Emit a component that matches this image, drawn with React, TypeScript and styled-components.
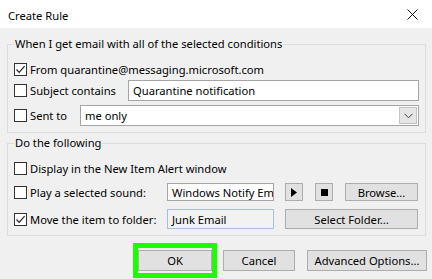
import React from 'react';
import styled, { createGlobalStyle } from 'styled-components';

const GlobalStyle = createGlobalStyle`
  html, body {
    margin: 0;
    padding: 0;
    background: #f0f0f0;
  }
  * {
    box-sizing: border-box;
  }
`;

const Dialog = styled.div`
  width: 432px;
  height: 279px;
  overflow: hidden;
  background: #f0f0f0;
  font-family: 'Noto Sans', 'Open Sans', sans-serif;
  font-size: 11.2px;
  color: #000;
`;

const TitleBar = styled.div`
  height: 28px;
  background: #fff;
  display: flex;
  align-items: center;
  justify-content: space-between;
  padding: 0 14px 0 8px;
`;

const Title = styled.span`
  margin-top: 2px;
`;

const Body = styled.div`
  padding: 8px 6px 0 7px;
`;

const Group = styled.fieldset<{ $top?: number }>`
  margin: ${(p) => p.$top || 0}px 0 0 0;
  padding: 0 6px 6px 6px;
  border: 1px solid #dcdcdc;
  min-width: 0;
`;

const Legend = styled.legend`
  padding: 0 1px;
  margin: 0;
  height: 16px;
  line-height: 16px;
`;

const Rows = styled.div`
  display: flex;
  flex-direction: column;
`;

const Row = styled.div<{ $h: number; $mt?: number }>`
  display: flex;
  align-items: center;
  height: ${(p) => p.$h}px;
  margin-top: ${(p) => p.$mt || 0}px;
`;

const Check = styled.span`
  width: 13px;
  height: 13px;
  border: 1px solid #333;
  background: #fff;
  display: inline-flex;
  align-items: center;
  justify-content: center;
  flex: none;
`;

const Label = styled.span<{ $w?: number }>`
  margin-left: 3px;
  white-space: nowrap;
  width: ${(p) => (p.$w ? `${p.$w}px` : 'auto')};
  flex: none;
`;

const TextBox = styled.div<{ $w?: number; $readonly?: boolean }>`
  height: 100%;
  width: ${(p) => (p.$w ? `${p.$w}px` : 'auto')};
  flex: ${(p) => (p.$w ? 'none' : '1')};
  background: ${(p) => (p.$readonly ? '#f2f2f2' : '#fff')};
  border: 1px solid ${(p) => (p.$readonly ? '#a8bedb' : '#a5a5a5')};
  padding: 0 4px;
  display: flex;
  align-items: center;
  white-space: nowrap;
  overflow: hidden;
`;

const Combo = styled.div`
  flex: 1;
  height: 100%;
  border: 1px solid #a5a5a5;
  background: #fff;
  display: flex;
  align-items: stretch;
`;

const ComboText = styled.span`
  flex: 1;
  padding-left: 4px;
  display: flex;
  align-items: center;
`;

const ComboArrow = styled.span`
  width: 18px;
  margin: 1px;
  background: #e5e5e5;
  border: 1px solid #c4c4c4;
  display: flex;
  align-items: center;
  justify-content: center;
`;

const Button = styled.button<{ $w: number; $h?: number; $ml?: number }>`
  width: ${(p) => p.$w}px;
  height: ${(p) => p.$h || 21}px;
  margin-left: ${(p) => p.$ml || 0}px;
  flex: none;
  background: #e1e1e1;
  border: 1px solid #adadad;
  font-family: inherit;
  font-size: inherit;
  color: #000;
  padding: 0;
  display: flex;
  align-items: center;
  justify-content: center;
`;

const Footer = styled.div`
  display: flex;
  justify-content: flex-end;
  align-items: center;
  padding-top: 7px;
  margin-right: -1px;
`;

const Highlight = styled.div`
  border: 5px solid #19ff00;
  padding: 2px 0;
  margin-right: 6px;
`;

const Tick = () => (
  <svg width="11" height="11" viewBox="0 0 11 11">
    <path d="M1.5 5.5 L4.2 8.3 L9.6 2.2" fill="none" stroke="#222" strokeWidth="1.2" />
  </svg>
);

const App: React.FC = () => {
  return (
    <Dialog>
      <GlobalStyle />
      <TitleBar>
        <Title>Create Rule</Title>
        <svg width="11" height="11" viewBox="0 0 11 11">
          <path d="M0.5 0.5 L10.5 10.5 M10.5 0.5 L0.5 10.5" stroke="#111" strokeWidth="1" />
        </svg>
      </TitleBar>
      <Body>
        <Group>
          <Legend>When I get email with all of the selected conditions</Legend>
          <Rows>
            <Row $h={22} $mt={6}>
              <Check>
                <Tick />
              </Check>
              <Label>From quarantine@messaging.microsoft.com</Label>
            </Row>
            <Row $h={21}>
              <Check />
              <Label $w={98}>Subject contains</Label>
              <TextBox>Quarantine notification</TextBox>
            </Row>
            <Row $h={21} $mt={4}>
              <Check />
              <Label $w={50}>Sent to</Label>
              <Combo>
                <ComboText>me only</ComboText>
                <ComboArrow>
                  <svg width="9" height="6" viewBox="0 0 9 6">
                    <path d="M0.5 0.8 L4.5 4.8 L8.5 0.8" fill="none" stroke="#444" strokeWidth="1" />
                  </svg>
                </ComboArrow>
              </Combo>
            </Row>
          </Rows>
        </Group>
        <Group $top={2}>
          <Legend>Do the following</Legend>
          <Rows>
            <Row $h={21} $mt={7}>
              <Check />
              <Label>Display in the New Item Alert window</Label>
            </Row>
            <Row $h={18} $mt={4}>
              <Check />
              <Label $w={137}>Play a selected sound:</Label>
              <TextBox $w={107}>Windows Notify Em</TextBox>
              <Button $w={18} $h={18} $ml={11}>
                <svg width="6" height="9" viewBox="0 0 6 9">
                  <path d="M0 0 L6 4.5 L0 9 Z" fill="#000" />
                </svg>
              </Button>
              <Button $w={18} $h={18} $ml={12}>
                <svg width="7" height="7" viewBox="0 0 7 7">
                  <rect width="7" height="7" fill="#000" />
                </svg>
              </Button>
              <Button $w={73} $h={18} $ml={12}>
                Browse...
              </Button>
            </Row>
            <Row $h={20} $mt={8}>
              <Check>
                <Tick />
              </Check>
              <Label $w={137}>Move the item to folder:</Label>
              <TextBox $w={107} $readonly>
                Junk Email
              </TextBox>
              <Button $w={133} $h={20} $ml={11}>
                Select Folder...
              </Button>
            </Row>
          </Rows>
        </Group>
        <Footer>
          <Highlight>
            <Button $w={74}>OK</Button>
          </Highlight>
          <Button $w={72}>Cancel</Button>
          <Button $w={120} $ml={12}>
            Advanced Options...
          </Button>
        </Footer>
      </Body>
    </Dialog>
  );
};

export default App;
